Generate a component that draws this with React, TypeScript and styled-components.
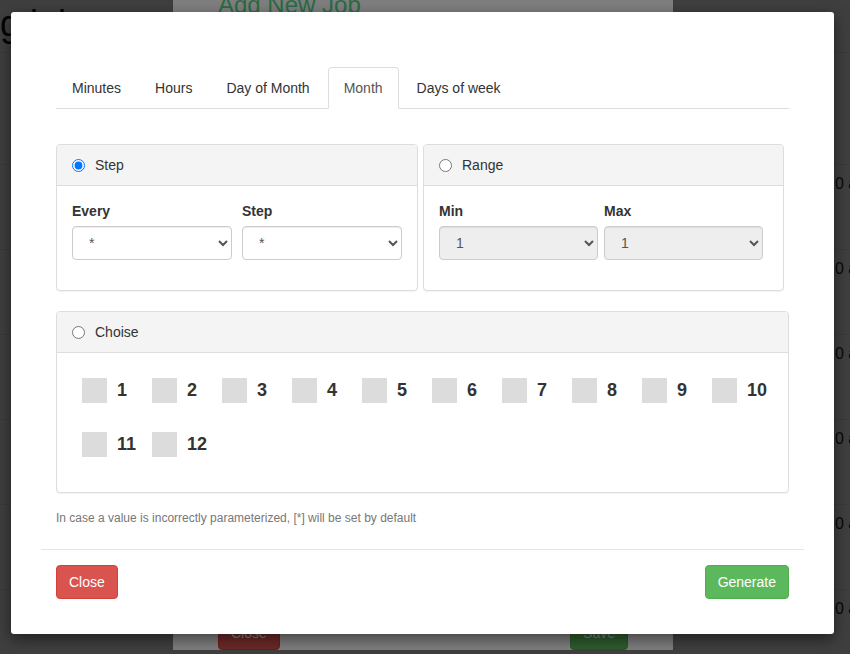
import React from "react";
import styled, { createGlobalStyle, css } from "styled-components";

const GlobalStyle = createGlobalStyle`
  html, body {
    margin: 0;
    padding: 0;
  }
  body {
    font-family: "Liberation Sans", Arial, sans-serif;
    font-size: 14px;
    line-height: 1.42857;
    color: #333;
    overflow: hidden;
  }
  * {
    box-sizing: border-box;
  }
`;

const TABS = ["Minutes", "Hours", "Day of Month", "Month", "Days of week"];
const MONTHS = Array.from({ length: 12 }, (_, i) => i + 1);
const SCHEDULE = ["10 am", "10 am", "10 am", "10 am", "10 am", "10 am"];

export default function App() {
  return (
    <>
      <GlobalStyle />
      <Stage>
        <PageHeader>
          <PageTitle>Log jobs</PageTitle>
        </PageHeader>
        <Schedule>
          {SCHEDULE.map((time, i) => (
            <ScheduleRow key={i}>
              <span />
              <ScheduleCell>{time}</ScheduleCell>
            </ScheduleRow>
          ))}
        </Schedule>

        <Backdrop />
        <JobModal>
          <JobTitle>Add New Job</JobTitle>
          <JobFooter>
            <Button $variant="danger">Close</Button>
            <Button $variant="success">Save</Button>
          </JobFooter>
        </JobModal>
        <Backdrop />

        <Modal>
          <ModalBody>
            <Tabs>
              {TABS.map((tab) => (
                <TabItem key={tab}>
                  <TabLink $active={tab === "Month"}>{tab}</TabLink>
                </TabItem>
              ))}
            </Tabs>

            <TabContent>
              <PanelGrid>
                <Panel>
                  <PanelHeading>
                    <Radio type="radio" name="mode" defaultChecked />
                    <span>Step</span>
                  </PanelHeading>
                  <PanelBody>
                    <FieldGrid $col={160} $gap={10}>
                      <div>
                        <FieldLabel>Every</FieldLabel>
                        <Select defaultValue="*">
                          <option>*</option>
                        </Select>
                      </div>
                      <div>
                        <FieldLabel>Step</FieldLabel>
                        <Select defaultValue="*">
                          <option>*</option>
                        </Select>
                      </div>
                    </FieldGrid>
                  </PanelBody>
                </Panel>

                <Panel>
                  <PanelHeading>
                    <Radio type="radio" name="mode" />
                    <span>Range</span>
                  </PanelHeading>
                  <PanelBody>
                    <FieldGrid $col={159} $gap={6}>
                      <div>
                        <FieldLabel>Min</FieldLabel>
                        <Select disabled defaultValue="1">
                          <option>1</option>
                        </Select>
                      </div>
                      <div>
                        <FieldLabel>Max</FieldLabel>
                        <Select disabled defaultValue="1">
                          <option>1</option>
                        </Select>
                      </div>
                    </FieldGrid>
                  </PanelBody>
                </Panel>
              </PanelGrid>

              <Panel>
                <PanelHeading>
                  <Radio type="radio" name="mode" />
                  <span>Choise</span>
                </PanelHeading>
                <ChoiceGrid>
                  {MONTHS.map((m) => (
                    <ChoiceItem key={m}>
                      <ChoiceBox />
                      <ChoiceNumber>{m}</ChoiceNumber>
                    </ChoiceItem>
                  ))}
                </ChoiceGrid>
              </Panel>

              <HelpText>
                In case a value is incorrectly parameterized, [*] will be set by
                default
              </HelpText>
            </TabContent>
          </ModalBody>

          <ModalFooter>
            <Button $variant="danger">Close</Button>
            <Button $variant="success">Generate</Button>
          </ModalFooter>
        </Modal>
      </Stage>
    </>
  );
}

const Stage = styled.div`
  position: relative;
  width: 850px;
  height: 654px;
  overflow: hidden;
  background: #fff;
`;

const PageHeader = styled.div`
  height: 53px;
  border-bottom: 1px solid #e8e8e8;
  overflow: hidden;
`;

const PageTitle = styled.h1`
  margin: 0;
  padding-top: 4px;
  font-size: 36px;
  line-height: 40px;
  font-weight: 400;
  color: #111;
  text-indent: -40px;
  white-space: nowrap;
`;

const Schedule = styled.div`
  margin-top: 111px;
`;

const ScheduleRow = styled.div`
  display: grid;
  grid-template-columns: 826px auto;
  height: 85px;
  border-top: 1px solid #e8e8e8;
`;

const ScheduleCell = styled.div`
  padding-top: 8px;
  font-size: 16px;
  line-height: 22px;
  color: #222;
  white-space: nowrap;
`;

const Backdrop = styled.div`
  position: absolute;
  inset: 0;
  background: rgba(0, 0, 0, 0.5);
`;

const JobModal = styled.div`
  position: absolute;
  left: 173px;
  top: -8px;
  bottom: 4px;
  width: 500px;
  background: #fff;
  display: flex;
  flex-direction: column;
  justify-content: space-between;
  padding: 0 45px;
`;

const JobTitle = styled.h2`
  margin: 0;
  font-size: 24px;
  line-height: 26px;
  font-weight: 400;
  color: #52d88a;
`;

const JobFooter = styled.div`
  display: flex;
  justify-content: space-between;
`;

const Modal = styled.div`
  position: absolute;
  left: 11px;
  top: 12px;
  width: 823px;
  background: #fff;
  border-radius: 3px;
  box-shadow: 0 5px 15px rgba(0, 0, 0, 0.5);
`;

const ModalBody = styled.div`
  padding: 55px 45px 0;
`;

const Tabs = styled.ul`
  display: flex;
  margin: 0;
  padding: 0;
  list-style: none;
  border-bottom: 1px solid #ddd;
`;

const TabItem = styled.li`
  margin-bottom: -1px;
  margin-right: 2px;
`;

const TabLink = styled.a<{ $active?: boolean }>`
  display: block;
  padding: 10px 15px;
  line-height: 20px;
  border: 1px solid transparent;
  border-radius: 4px 4px 0 0;
  color: #333;
  cursor: pointer;
  ${(p) =>
    p.$active &&
    css`
      color: #555;
      background: #fff;
      border-color: #ddd #ddd transparent;
    `}
`;

const TabContent = styled.div`
  margin-top: 35px;
`;

const PanelGrid = styled.div`
  display: grid;
  grid-template-columns: 362px 361px;
  column-gap: 5px;
  margin-bottom: 20px;
`;

const Panel = styled.div`
  border: 1px solid #ddd;
  border-radius: 4px;
  background: #fff;
  box-shadow: 0 1px 1px rgba(0, 0, 0, 0.05);
`;

const PanelHeading = styled.div`
  display: flex;
  align-items: center;
  padding: 10px 15px;
  line-height: 20px;
  background: #f4f4f4;
  border-bottom: 1px solid #ddd;
  border-radius: 3px 3px 0 0;
  color: #333;
`;

const Radio = styled.input`
  width: 13px;
  height: 13px;
  margin: 0 10px 0 0;
`;

const PanelBody = styled.div`
  padding: 15px 15px 30px;
`;

const FieldGrid = styled.div<{ $col: number; $gap: number }>`
  display: grid;
  grid-template-columns: ${(p) => p.$col}px ${(p) => p.$col}px;
  column-gap: ${(p) => p.$gap}px;
`;

const FieldLabel = styled.label`
  display: block;
  margin-bottom: 5px;
  font-weight: 700;
  line-height: 20px;
`;

const Select = styled.select`
  display: block;
  width: 100%;
  height: 34px;
  padding: 6px 4px 6px 12px;
  font-family: inherit;
  font-size: 14px;
  color: #555;
  background: #fff;
  border: 1px solid #ccc;
  border-radius: 4px;
  box-shadow: inset 0 1px 1px rgba(0, 0, 0, 0.075);

  &:disabled {
    background: #eee;
    opacity: 1;
    color: #555;
  }
`;

const ChoiceGrid = styled.div`
  display: grid;
  grid-template-columns: repeat(10, 70px);
  row-gap: 29px;
  padding: 25px 0 35px 25px;
`;

const ChoiceItem = styled.div`
  display: flex;
  align-items: center;
  gap: 10px;
`;

const ChoiceBox = styled.span`
  width: 25px;
  height: 25px;
  background: #dcdcdc;
`;

const ChoiceNumber = styled.span`
  font-size: 18px;
  font-weight: 700;
  line-height: 25px;
  color: #333;
`;

const HelpText = styled.p`
  margin: 17px 0 0;
  font-size: 12px;
  line-height: 17px;
  color: #777;
`;

const ModalFooter = styled.div`
  display: flex;
  justify-content: space-between;
  margin: 22px 30px 0;
  padding: 15px 15px 35px;
  border-top: 1px solid #e5e5e5;
`;

const Button = styled.button<{ $variant: "danger" | "success" }>`
  padding: 6px 12px;
  font-family: inherit;
  font-size: 14px;
  line-height: 20px;
  color: #fff;
  border: 1px solid;
  border-radius: 4px;
  cursor: pointer;
  ${(p) =>
    p.$variant === "danger"
      ? css`
          background: #d9534f;
          border-color: #d43f3a;
        `
      : css`
          background: #5cb85c;
          border-color: #4cae4c;
        `}
`;
